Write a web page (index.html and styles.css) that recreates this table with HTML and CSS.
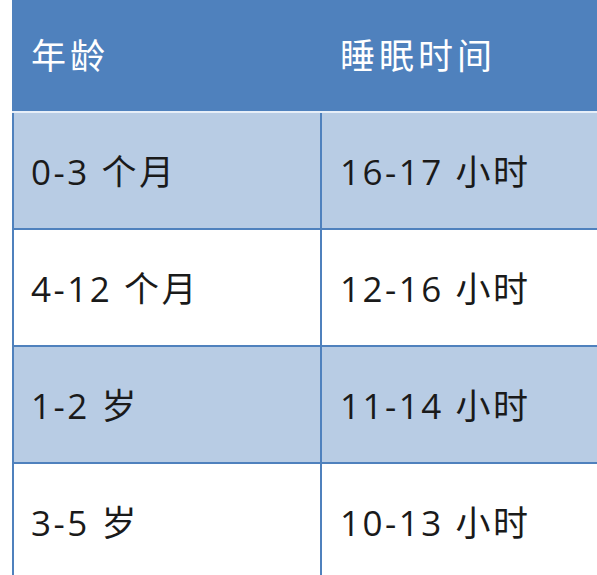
FILE: index.html
```html
<!DOCTYPE html>
<html lang="zh">
<head>
<meta charset="utf-8">
<title>睡眠时间</title>
<link rel="stylesheet" href="styles.css">
</head>
<body>
<div class="page">
  <table class="sleep">
    <thead>
      <tr><th class="c1">年龄</th><th class="c2">睡眠时间</th></tr>
    </thead>
    <tbody>
      <tr class="odd"><td class="c1">0-3 个月</td><td class="c2">16-17 小时</td></tr>
      <tr class="even"><td class="c1">4-12 个月</td><td class="c2">12-16 小时</td></tr>
      <tr class="odd"><td class="c1">1-2 岁</td><td class="c2">11-14 小时</td></tr>
      <tr class="even"><td class="c1">3-5 岁</td><td class="c2">10-13 小时</td></tr>
    </tbody>
  </table>
</div>
</body>
</html>
```
FILE: styles.css
```css
html, body {
  margin: 0;
  padding: 0;
  background: #ffffff;
  overflow: hidden;
}
.page {
  width: 597px;
  height: 575px;
  overflow: hidden;
  padding-left: 12px;
  box-sizing: border-box;
}
.sleep {
  border-collapse: collapse;
  width: 700px;
  font-family: "Open Sans", "Noto Sans CJK SC", sans-serif;
  font-size: 35px;
  letter-spacing: 2.5px;
  color: #1a1a1a;
  border-left: 2px solid #4f81bd;
}
.sleep th, .sleep td {
  text-align: left;
  font-weight: normal;
  padding: 0;
  vertical-align: middle;
  line-height: 1.2;
}
.sleep th {
  background: #4f81bd;
  color: #ffffff;
  height: 111px;
  border-bottom: 2px solid #e6eef8;
  font-size: 35px;
  letter-spacing: 4px;
}
.sleep td {
  height: 117px;
  padding-top: 3px;
  box-sizing: border-box;
  border-bottom: 2px solid #4f81bd;
}
.sleep .c1 {
  width: 308px;
  padding-left: 17px;
  box-sizing: border-box;
}
.sleep td.c1 {
  border-right: 2px solid #4f81bd;
}
.sleep th.c1 {
  border-right: 2px solid #4f81bd;
}
.sleep .c2 {
  padding-left: 18px;
}
.sleep tr.odd td {
  background: #b8cce4;
}
.sleep tr.even td {
  background: #ffffff;
}
```
